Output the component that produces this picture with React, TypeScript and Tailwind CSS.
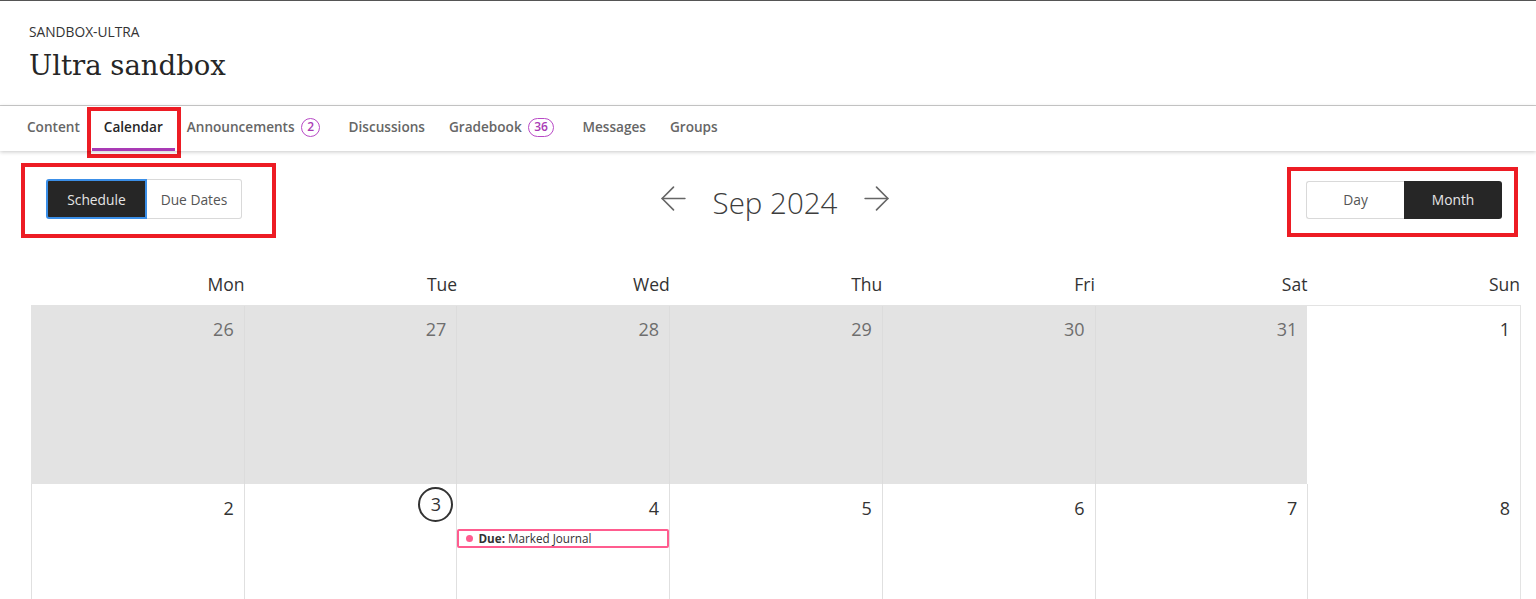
import { ArrowLeft, ArrowRight } from "lucide-react";

const tabs = [
  { label: "Content" },
  { label: "Calendar", active: true },
  { label: "Announcements", badge: "2" },
  { label: "Discussions" },
  { label: "Gradebook", badge: "36" },
  { label: "Messages" },
  { label: "Groups" },
];

const weekdays = ["Mon", "Tue", "Wed", "Thu", "Fri", "Sat", "Sun"];

const firstRow = ["26", "27", "28", "29", "30", "31"];
const secondRow = ["2", "3", "4", "5", "6", "7", "8"];

export default function App() {
  return (
    <main className="relative h-[599px] w-[1536px] overflow-hidden bg-white font-['Open_Sans',sans-serif] text-[#262626]">
      <header className="h-[106px] border-t border-b border-t-[#555555] border-b-[#cdcdcd] pl-[29px] pt-[22px]">
        <p className="text-[13.75px] leading-[18px] text-[#333333]">SANDBOX-ULTRA</p>
        <h1 className="mt-[5px] font-['DejaVu_Serif',serif] text-[27.5px] leading-[38px] text-[#262626]">Ultra sandbox</h1>
      </header>

      <nav className="relative z-10 flex h-[45px] items-center gap-6 pl-[27px] shadow-[0_1px_4px_rgba(0,0,0,0.22)]">
        {tabs.map((tab) => (
          <div key={tab.label} className="relative flex h-full items-center pb-[3px]">
            <span className={`text-[13.6px] font-semibold ${tab.active ? "text-[#262626]" : "text-[#666666]"}`}>{tab.label}</span>
            {tab.active && <span className="absolute -inset-x-3 bottom-0 h-[3px] bg-[#a93ab5]" />}
            {tab.badge && (
              <span className="ml-[6.5px] mr-[4.5px] flex h-[19px] min-w-[19px] items-center justify-center rounded-full border border-[#b84ac6] px-[5px] text-[12px] font-semibold text-[#a93ab5]">
                {tab.badge}
              </span>
            )}
          </div>
        ))}
      </nav>

      <section className="flex items-center justify-between pl-[46px] pr-[34px] pt-[25px]">
        <div className="flex h-[40px] w-[196px] text-[13.8px]">
          <button className="w-[101px] rounded-l-[3px] border-2 border-[#3b8fe8] bg-[#262626] pt-[2px] text-[#e5e5e5]">Schedule</button>
          <button className="w-[95px] rounded-r-[3px] border border-l-0 border-[#d9d9d9] pt-[2px] text-[#555555]">Due Dates</button>
        </div>

        <div className="ml-[2px] flex items-center gap-[20px] text-[#666666]">
          <ArrowLeft className="mb-[2px]" size={39} strokeWidth={1} />
          <h2 className="pt-[8px] text-[29.5px] font-light leading-[38px] text-[#3d3d3d]">Sep 2024</h2>
          <ArrowRight className="mb-[2px]" size={39} strokeWidth={1} />
        </div>

        <div className="mt-[2px] flex h-[38px] w-[196px] text-[13.8px]">
          <button className="w-[98px] rounded-l-[3px] border border-r-0 border-[#d9d9d9] text-[#555555]">Day</button>
          <button className="w-[98px] rounded-r-[3px] bg-[#262626] text-[#e5e5e5]">Month</button>
        </div>
      </section>

      <section className="ml-[31px] mr-[15px] mt-[51px]">
        <div className="ml-px mr-px grid grid-cols-7">
          {weekdays.map((day) => (
            <div key={day} className="pb-[9px] text-right text-[17.5px] leading-[23px] text-[#333333]">{day}</div>
          ))}
        </div>

        <div className="border-r border-[#e3e3e3]">
          <div className="grid grid-cols-7 border-t border-[#e3e3e3]">
            {firstRow.map((date, i) => (
              <div key={date} className={`h-[178px] bg-[#e3e3e3] pr-[10px] pt-[11px] text-right text-[18px] leading-[24px] text-[#6e6e6e] ${i > 0 ? "border-l border-[#dcdcdc]" : ""}`}>
                {date}
              </div>
            ))}
            <div className="h-[178px] pr-[10px] pt-[11px] text-right text-[18px] leading-[24px] text-[#333333]">1</div>

            {secondRow.map((date) => (
              <div key={date} className="relative h-[120px] border-l border-[#e0e0e0] pr-[10px] pt-[12px] text-right text-[18px] leading-[24px] text-[#333333]">
                {date === "3" ? (
                  <span className="absolute right-[3px] top-[3px] flex h-[35px] w-[35px] items-center justify-center rounded-full border-2 border-[#333333] pb-[2px]">3</span>
                ) : (
                  date
                )}
                {date === "4" && (
                  <div className="absolute left-0 right-0 top-[45px] flex h-[19px] items-center rounded-[2px] border-2 border-[#ff5c8f] pl-[7px] text-left text-[11.7px] leading-none text-[#333333]">
                    <span className="mr-[5px] h-[7px] w-[7px] rounded-full bg-[#ff5c8f]" />
                    <b className="mr-[3px] font-bold">Due:</b>Marked Journal
                  </div>
                )}
              </div>
            ))}
          </div>
        </div>
      </section>

      {/* red annotation boxes */}
      <div className="absolute left-[87px] top-[107px] h-[51px] w-[94px] border-4 border-[#ed1c24]" />
      <div className="absolute left-[21px] top-[163px] h-[75px] w-[255px] border-4 border-[#ed1c24]" />
      <div className="absolute left-[1287px] top-[167px] h-[70px] w-[231px] border-4 border-[#ed1c24]" />
    </main>
  );
}
